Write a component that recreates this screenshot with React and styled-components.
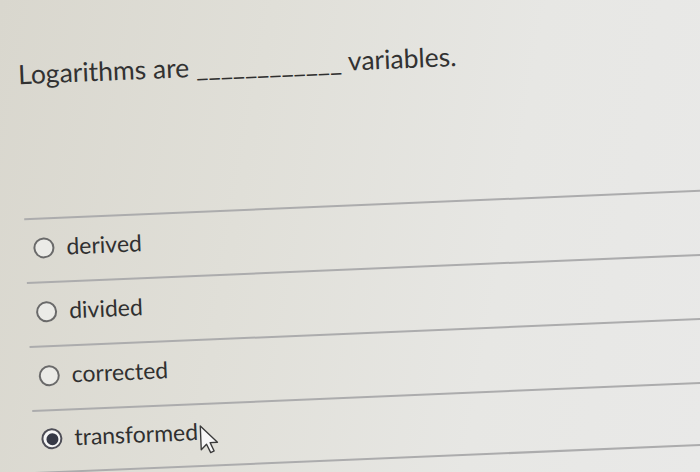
import React from "react";
import styled, { createGlobalStyle } from "styled-components";

const GlobalStyle = createGlobalStyle`
  body {
    margin: 0;
    background: #e2e1da;
    font-family: Lato, "Open Sans", sans-serif;
  }
`;

const Page = styled.div`
  width: 700px;
  height: 472px;
  overflow: hidden;
  background: linear-gradient(100deg, #d9d7ce 0%, #e0dfd8 35%, #e7e7e4 70%, #e9e9e8 100%);
`;

// the photo is taken at a slight tilt, so the whole sheet is turned a little
const Sheet = styled.div`
  width: 780px;
  padding: 60px 0 0 15px;
  transform: rotate(-2.4deg);
  transform-origin: 0 0;
  color: #323232;
`;

const Question = styled.p`
  margin: 0 0 127px 0;
  font-size: 26.5px;
  line-height: 1.2;
  white-space: nowrap;
`;

const Blank = styled.span`
  color: #2f2f2f;
`;

const Answers = styled.ul`
  list-style: none;
  margin: 0;
  padding: 0;
`;

const Row = styled.li`
  box-sizing: border-box;
  height: 64px;
  display: flex;
  align-items: center;
  gap: 12px;
  padding: 0 0 4px 8px;
  border-top: 2px solid #acacad;
  &:last-child {
    border-bottom: 2px solid #acacad;
  }
`;

const Radio = styled.span`
  box-sizing: border-box;
  width: 21px;
  height: 21px;
  border-radius: 50%;
  border: 2px solid ${(p) => (p.checked ? "#4e4e57" : "#6a6a6a")};
  background: ${(p) => (p.checked ? "#f6f6f6" : "#ebebe7")};
  display: flex;
  align-items: center;
  justify-content: center;
  flex-shrink: 0;
  &::after {
    content: "";
    width: 12px;
    height: 12px;
    border-radius: 50%;
    background: ${(p) => (p.checked ? "#363946" : "transparent")};
  }
`;

const Label = styled.span`
  position: relative;
  font-size: 23px;
  margin-bottom: 3px;
  color: #303030;
`;

const Pointer = styled.svg`
  position: absolute;
  left: calc(100% + 1px);
  top: 8px;
  width: 19px;
  height: 29px;
  overflow: visible;
`;

const answers = [
  { text: "derived" },
  { text: "divided" },
  { text: "corrected" },
  { text: "transformed", checked: true, cursor: true },
];

export default function App() {
  return (
    <Page>
      <GlobalStyle />
      <Sheet>
        <Question>
          Logarithms are <Blank>____________</Blank> variables.
        </Question>
        <Answers>
          {answers.map((a) => (
            <Row key={a.text}>
              <Radio checked={a.checked} />
              <Label>
                {a.text}
                {a.cursor && (
                  <Pointer viewBox="0 0 12 19">
                    <path
                      d="M0.6 0.6 L0.6 16.2 L4.2 12.8 L6.7 18.4 L9 17.4 L6.6 11.8 L11.4 11.8 Z"
                      fill="#f7f7f7"
                      stroke="#3a3a3a"
                      strokeWidth="0.9"
                      strokeLinejoin="round"
                    />
                  </Pointer>
                )}
              </Label>
            </Row>
          ))}
        </Answers>
      </Sheet>
    </Page>
  );
}
